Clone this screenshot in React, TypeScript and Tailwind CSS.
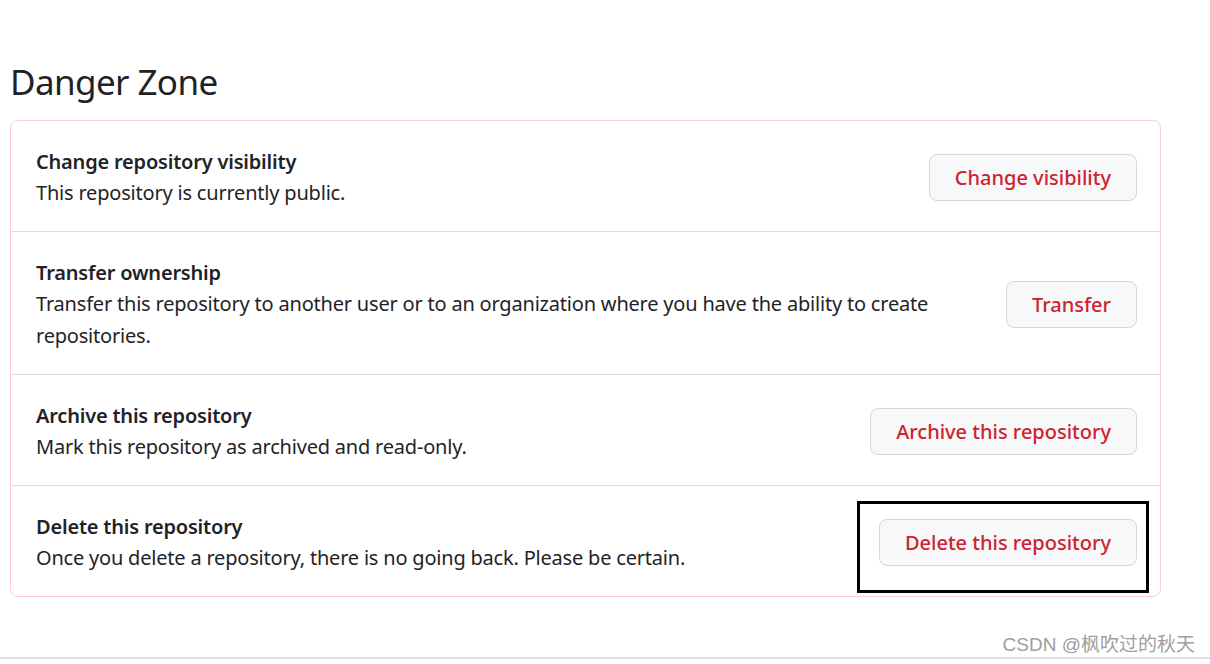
import React from 'react'

interface DangerRow {
  title: string
  description: string
  action: string
}

const rows: DangerRow[] = [
  {
    title: 'Change repository visibility',
    description: 'This repository is currently public.',
    action: 'Change visibility',
  },
  {
    title: 'Transfer ownership',
    description:
      'Transfer this repository to another user or to an organization where you have the ability to create repositories.',
    action: 'Transfer',
  },
  {
    title: 'Archive this repository',
    description: 'Mark this repository as archived and read-only.',
    action: 'Archive this repository',
  },
  {
    title: 'Delete this repository',
    description: 'Once you delete a repository, there is no going back. Please be certain.',
    action: 'Delete this repository',
  },
]

export default function App() {
  return (
    <div
      className="flex flex-col w-full h-[664px] bg-white overflow-hidden text-[#1f2328]"
      style={{ fontFamily: '"Noto Sans", "Open Sans", Arial, sans-serif' }}
    >
      <div className="pl-[10px] pr-[49px] pt-[57px]">
        {/* Heading */}
        <h2 className="text-[35px] leading-[50px] font-normal tracking-[-0.6px] mb-[13px]">Danger Zone</h2>

        {/* Danger box */}
        <div className="border border-[#ffcdcd] rounded-[8px]">
          {rows.map((row, i) => (
            <div
              key={row.title}
              className={`relative flex items-center justify-between gap-[20px] pl-[25px] pr-[23px] pt-[25px] pb-[22px] ${
                i > 0 ? 'border-t border-[#d8dee4]' : ''
              }`}
            >
              <div className="flex-1 min-w-0 text-[20px] tracking-[-0.2px]">
                <div className="leading-[31px] font-semibold">{row.title}</div>
                <div className="leading-[32px]">{row.description}</div>
              </div>
              <button className="shrink-0 h-[47px] px-[25px] rounded-[8px] border border-[#d0d7de] bg-[#f6f8fa] text-[#cf222e] text-[20px] font-medium">
                {row.action}
              </button>
              {/* annotation frame drawn over the delete button */}
              {i === rows.length - 1 && (
                <div className="absolute right-[11px] top-[15px] w-[292px] h-[92px] border-[3px] border-black pointer-events-none"></div>
              )}
            </div>
          ))}
        </div>
      </div>

      {/* Watermark + bottom rule */}
      <div className="mt-auto">
        <div
          className="flex justify-end pr-[15px] text-[19px] leading-[24px] text-[#9e9e9e]"
          style={{ fontFamily: '"Liberation Sans", "Noto Sans CJK SC", sans-serif' }}
        >
          CSDN @枫吹过的秋天
        </div>
        <div className="h-[2px] bg-[#dcdde3] mb-[5px]"></div>
      </div>
    </div>
  )
}
